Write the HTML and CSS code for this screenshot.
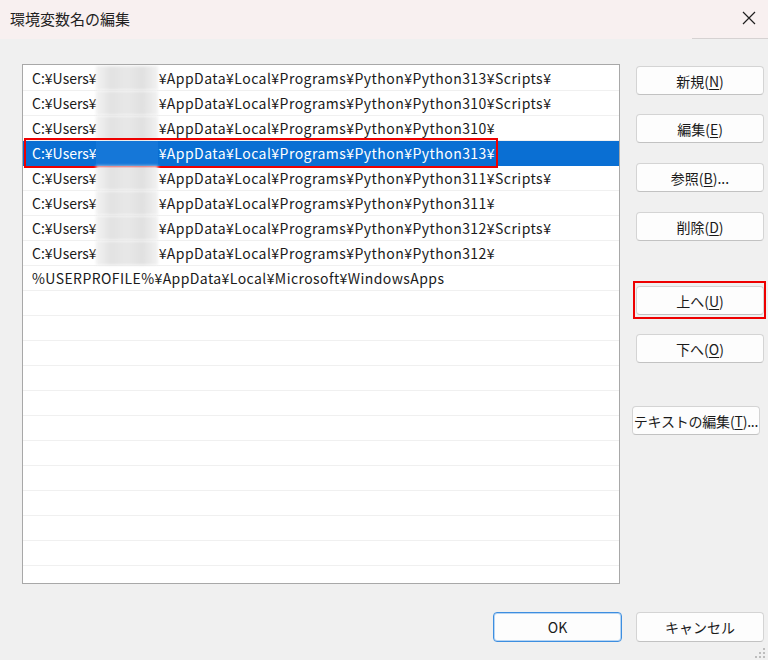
FILE: index.html
```html
<!DOCTYPE html>
<html lang="ja">
<head>
<meta charset="utf-8">
<title>環境変数名の編集</title>
<link rel="stylesheet" href="styles.css">
</head>
<body>
<div class="window">
  <div class="titlebar">
    <div class="title">環境変数名の編集</div>
    <div class="close">
      <svg width="14" height="14" viewBox="0 0 14 14"><path d="M1 1 L13 13 M13 1 L1 13" stroke="#1f1f1f" stroke-width="1.2" fill="none"/></svg>
    </div>
  </div>
  <div class="content">
    <div class="main">
      <div class="list">
        <div class="row"><span class="pre">C:¥Users¥</span><span class="blur"></span><span class="post">¥AppData¥Local¥Programs¥Python¥Python313¥Scripts¥</span></div>
        <div class="row"><span class="pre">C:¥Users¥</span><span class="blur"></span><span class="post">¥AppData¥Local¥Programs¥Python¥Python310¥Scripts¥</span></div>
        <div class="row"><span class="pre">C:¥Users¥</span><span class="blur"></span><span class="post">¥AppData¥Local¥Programs¥Python¥Python310¥</span></div>
        <div class="row selected"><span class="pre">C:¥Users¥</span><span class="blur"></span><span class="post">¥AppData¥Local¥Programs¥Python¥Python313¥</span><span class="mark"></span></div>
        <div class="row"><span class="pre">C:¥Users¥</span><span class="blur"></span><span class="post">¥AppData¥Local¥Programs¥Python¥Python311¥Scripts¥</span></div>
        <div class="row"><span class="pre">C:¥Users¥</span><span class="blur"></span><span class="post">¥AppData¥Local¥Programs¥Python¥Python311¥</span></div>
        <div class="row"><span class="pre">C:¥Users¥</span><span class="blur"></span><span class="post">¥AppData¥Local¥Programs¥Python¥Python312¥Scripts¥</span></div>
        <div class="row"><span class="pre">C:¥Users¥</span><span class="blur"></span><span class="post">¥AppData¥Local¥Programs¥Python¥Python312¥</span></div>
        <div class="row"><span class="full">%USERPROFILE%¥AppData¥Local¥Microsoft¥WindowsApps</span></div>
        <div class="row"></div>
        <div class="row"></div>
        <div class="row"></div>
        <div class="row"></div>
        <div class="row"></div>
        <div class="row"></div>
        <div class="row"></div>
        <div class="row"></div>
        <div class="row"></div>
        <div class="row"></div>
        <div class="row"></div>
        <div class="row last"></div>
      </div>
      <div class="side">
        <button class="btn b-new">新規(<u>N</u>)</button>
        <button class="btn b-edit">編集(<u>E</u>)</button>
        <button class="btn b-browse">参照(<u>B</u>)...</button>
        <button class="btn b-del">削除(<u>D</u>)</button>
        <button class="btn b-up marked">上へ(<u>U</u>)</button>
        <button class="btn b-down">下へ(<u>O</u>)</button>
        <button class="btn b-text">テキストの編集(<u>T</u>)...</button>
      </div>
    </div>
    <div class="footer">
      <button class="btn ok">OK</button>
      <button class="btn cancel">キャンセル</button>
    </div>
  </div>
  <svg class="grip" width="10" height="10" viewBox="0 0 10 10">
    <rect x="8" y="0" width="2" height="2" fill="#bdbdbd"/>
    <rect x="4" y="4" width="2" height="2" fill="#bdbdbd"/>
    <rect x="8" y="4" width="2" height="2" fill="#bdbdbd"/>
    <rect x="0" y="8" width="2" height="2" fill="#bdbdbd"/>
    <rect x="4" y="8" width="2" height="2" fill="#bdbdbd"/>
    <rect x="8" y="8" width="2" height="2" fill="#bdbdbd"/>
  </svg>
</div>
</body>
</html>
```

FILE: styles.css
```css
* { box-sizing: border-box; }
html, body { margin: 0; padding: 0; }
body {
  width: 768px;
  height: 660px;
  overflow: hidden;
  font-family: "Noto Sans CJK JP", "Noto Sans", sans-serif;
  color: #1a1a1a;
  background: #f0f0f0;
}
.window {
  position: relative;
  width: 768px;
  height: 660px;
  display: flex;
  flex-direction: column;
  background: #f0f0f0;
}
.titlebar {
  height: 39px;
  flex: none;
  background: #f8f0f0;
  display: flex;
  align-items: center;
  justify-content: space-between;
}
.title {
  padding-left: 10px;
  font-size: 15px;
  color: #1f1f1f;
  line-height: 1;
  margin-top: -3px;
}
.close {
  width: 76px;
  height: 39px;
  display: flex;
  align-items: center;
  justify-content: flex-end;
  padding-right: 12px;
  padding-bottom: 3px;
  border-bottom: 1px solid #d6d2d2;
}
.content {
  flex: 1;
  display: flex;
  flex-direction: column;
  padding: 25px 4px 0 22px;
}
.main {
  display: flex;
  gap: 16px;
}
.list {
  width: 598px;
  height: 520px;
  border: 1px solid #a8a8a8;
  background: #fff;
  overflow: hidden;
}
.row {
  position: relative;
  height: 25px;
  border-bottom: 1px solid #f0f0f0;
  display: flex;
  align-items: center;
  padding-left: 9px;
  font-size: 14px;
  white-space: nowrap;
  color: #1a1a1a;
}
.row:first-child { margin-top: 1px; }
.row.last { border-bottom: none; }
.row.selected {
  background: #0a6fd3;
  color: #fff;
  border-bottom-color: #0a6fd3;
}
.pre { letter-spacing: 0; }
.post { letter-spacing: 0.46px; }
.full { letter-spacing: 0.42px; }
.blur {
  display: inline-block;
  width: 62px;
  height: 24px;
  flex: none;
  margin-left: -1px;
  margin-right: 1px;
  background: linear-gradient(90deg, #f2f2f2, #e2e2e2 25%, #e8e8e8 50%, #e0e0e0 75%, #f2f2f2);
  filter: blur(1.5px);
}
.row.selected .blur {
  background: #1577d8;
  filter: none;
}
.mark {
  position: absolute;
  left: 1px;
  top: -3px;
  width: 474px;
  height: 30px;
  border: 2px solid #ee0000;
  pointer-events: none;
}
.side {
  width: 128px;
  display: flex;
  flex-direction: column;
  padding-top: 2px;
}
.btn {
  position: relative;
  font-family: "Noto Sans CJK JP", "Noto Sans", sans-serif;
  font-size: 14px;
  color: #1a1a1a;
  background: #fdfdfd;
  border: 1px solid #d4d4d4;
  border-bottom-color: #c2c2c2;
  border-radius: 4px;
  height: 29px;
  width: 128px;
  padding: 0;
  line-height: 1;
  white-space: nowrap;
}
.btn u { text-underline-offset: 2px; }
.b-edit { margin-top: 19px; }
.b-browse { margin-top: 20px; }
.b-del { margin-top: 20px; }
.b-up { margin-top: 45px; }
.b-down { margin-top: 19px; }
.b-text { margin-top: 43px; margin-left: -4px; width: 128px; letter-spacing: -0.2px; }
.marked::after {
  content: "";
  position: absolute;
  left: -4px;
  right: -3px;
  top: -6px;
  bottom: -5px;
  border: 2px solid #ee0000;
}
.footer {
  display: flex;
  justify-content: flex-end;
  gap: 14px;
  margin-top: 28px;
}
.ok, .cancel { height: 30px; }
.ok { width: 129px; border: 1px solid #3d8ee0; box-shadow: inset 0 0 0 1px #b7d5f3; }
.grip {
  position: absolute;
  right: 3px;
  bottom: 2px;
}
```
